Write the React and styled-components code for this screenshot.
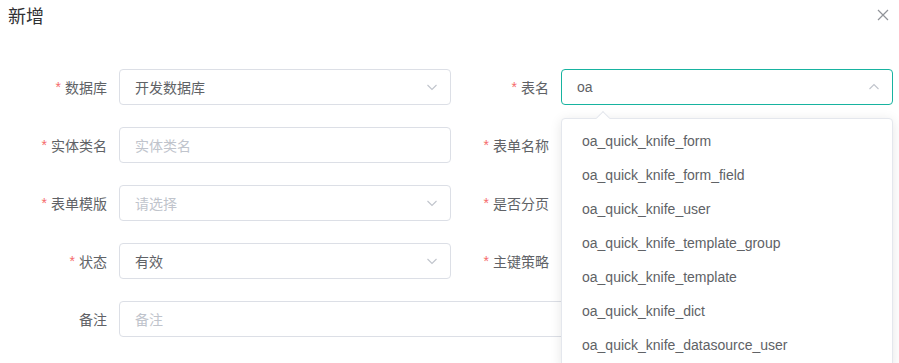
import React from "react";
import styled, { createGlobalStyle } from "styled-components";

const Global = createGlobalStyle`
  html, body { margin: 0; padding: 0; background: #fff; }
  body { font-family: "Liberation Sans", "Noto Sans CJK SC", sans-serif; overflow: hidden; }
  * { box-sizing: border-box; }
`;

const Dialog = styled.div`
  width: 899px;
  height: 363px;
  background: #fff;
  position: relative;
`;

const Header = styled.div`
  display: flex;
  justify-content: space-between;
  align-items: flex-start;
  padding: 4px 10px 0 8px;
  height: 69px;
`;

const Title = styled.span`
  font-size: 18px;
  line-height: 26px;
  color: #303133;
`;

const Close = styled.button`
  border: none;
  background: none;
  padding: 0;
  margin-top: 5px;
  width: 12px;
  height: 12px;
  display: flex;
  cursor: pointer;
`;

const Form = styled.div`
  display: grid;
  grid-template-columns: 112px 332px 110px 332px;
  row-gap: 22px;
  padding-left: 7px;
`;

const Label = styled.label`
  display: flex;
  align-items: center;
  justify-content: flex-end;
  padding-right: 12px;
  height: 36px;
  font-size: 14px;
  color: #606266;
`;

const Star = styled.span`
  color: #f56c6c;
  margin-right: 4px;
`;

const Field = styled.div`
  position: relative;
  grid-column: ${(p) => (p.$wide ? "span 3" : "auto")};
`;

const Box = styled.div`
  height: 36px;
  border: 1px solid ${(p) => (p.$focus ? "#17b3a0" : "#dcdfe6")};
  border-radius: 4px;
  display: flex;
  align-items: center;
  padding: 0 12px 0 15px;
  font-size: 14px;
  color: ${(p) => (p.$placeholder ? "#c0c4cc" : "#606266")};
`;

const Value = styled.span`
  flex: 1;
`;

const Dropdown = styled.div`
  position: absolute;
  top: 49px;
  left: 0;
  width: 332px;
  background: #fff;
  border: 1px solid #e4e7ed;
  border-radius: 4px;
  box-shadow: 0 2px 12px rgba(0, 0, 0, 0.1);
  padding: 5px 0;
  z-index: 10;
`;

const Arrow = styled.div`
  position: absolute;
  top: -6px;
  left: 36px;
  width: 10px;
  height: 10px;
  background: #fff;
  border-left: 1px solid #e4e7ed;
  border-top: 1px solid #e4e7ed;
  transform: rotate(45deg);
`;

const Option = styled.div`
  height: 34px;
  line-height: 34px;
  padding: 0 20px;
  font-size: 14px;
  color: #606266;
`;

const Chevron = ({ up }) => (
  <svg width="12" height="12" viewBox="0 0 12 12" fill="none">
    <path
      d={up ? "M1.5 8 L6 3.5 L10.5 8" : "M1.5 4 L6 8.5 L10.5 4"}
      stroke="#c0c4cc"
      strokeWidth="1.1"
    />
  </svg>
);

const options = [
  "oa_quick_knife_form",
  "oa_quick_knife_form_field",
  "oa_quick_knife_user",
  "oa_quick_knife_template_group",
  "oa_quick_knife_template",
  "oa_quick_knife_dict",
  "oa_quick_knife_datasource_user",
];

export default function App() {
  return (
    <>
      <Global />
      <Dialog>
        <Header>
          <Title>新增</Title>
          <Close aria-label="close">
            <svg width="12" height="12" viewBox="0 0 12 12">
              <path d="M1 1 L11 11 M11 1 L1 11" stroke="#909399" strokeWidth="1.2" />
            </svg>
          </Close>
        </Header>
        <Form>
          <Label><Star>*</Star>数据库</Label>
          <Field>
            <Box><Value>开发数据库</Value><Chevron /></Box>
          </Field>
          <Label><Star>*</Star>表名</Label>
          <Field>
            <Box $focus><Value>oa</Value><Chevron up /></Box>
            <Dropdown>
              <Arrow />
              {options.map((o) => (
                <Option key={o}>{o}</Option>
              ))}
            </Dropdown>
          </Field>

          <Label><Star>*</Star>实体类名</Label>
          <Field>
            <Box $placeholder><Value>实体类名</Value></Box>
          </Field>
          <Label><Star>*</Star>表单名称</Label>
          <Field>
            <Box />
          </Field>

          <Label><Star>*</Star>表单模版</Label>
          <Field>
            <Box $placeholder><Value>请选择</Value><Chevron /></Box>
          </Field>
          <Label><Star>*</Star>是否分页</Label>
          <Field>
            <Box />
          </Field>

          <Label><Star>*</Star>状态</Label>
          <Field>
            <Box><Value>有效</Value><Chevron /></Box>
          </Field>
          <Label><Star>*</Star>主键策略</Label>
          <Field>
            <Box />
          </Field>

          <Label>备注</Label>
          <Field $wide>
            <Box $placeholder><Value>备注</Value></Box>
          </Field>
        </Form>
      </Dialog>
    </>
  );
}
